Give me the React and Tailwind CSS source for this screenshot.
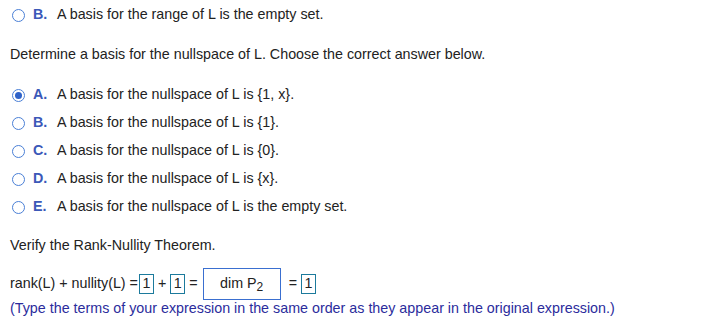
import React from 'react';

function Radio({ checked }) {
    return (
        <span className="relative inline-flex w-[13px] h-[13px] rounded-full border border-[#4a7fd6] bg-white items-center justify-center shrink-0">
            {checked && <span className="w-[7px] h-[7px] rounded-full bg-[#2f62c8]" />}
        </span>
    );
}

function Option({ letter, text, checked }) {
    return (
        <div className="flex items-center h-[28px]">
            <div className="w-[33px] flex justify-start pl-[12px]">
                <Radio checked={checked} />
            </div>
            <span className="w-[24px] font-bold text-[#3b58b8]">{letter}.</span>
            <span>{text}</span>
        </div>
    );
}

function Box({ children }) {
    return (
        <span className="inline-flex items-center justify-center w-[15px] h-[20px] border border-[#1c7a9c] mx-[4px]">{children}</span>
    );
}

export default function App() {
    return (
        <div className="w-[705px] h-[335px] bg-white text-[14.3px] text-[#222]" style={{ fontFamily: '"Liberation Sans", Arial, sans-serif' }}>
            <div className="pt-[1px]">
                <Option letter="B" text="A basis for the range of L is the empty set." />
            </div>
            <div className="pl-[10px] mt-[12px] h-[28px] flex items-center">
                Determine a basis for the nullspace of L. Choose the correct answer below.
            </div>
            <div className="mt-[12px]">
                <Option letter="A" text="A basis for the nullspace of L is {1, x}." checked />
                <Option letter="B" text="A basis for the nullspace of L is {1}." />
                <Option letter="C" text="A basis for the nullspace of L is {0}." />
                <Option letter="D" text="A basis for the nullspace of L is {x}." />
                <Option letter="E" text="A basis for the nullspace of L is the empty set." />
            </div>
            <div className="pl-[10px] mt-[11px] h-[28px] flex items-center">Verify the Rank-Nullity Theorem.</div>
            <div className="pl-[10px] mt-[8px] flex items-center h-[32px]">
                <span className="mr-[-3px]">rank(L) + nullity(L) =</span>
                <Box>1</Box>
                <span>+</span>
                <Box>1</Box>
                <span>=</span>
                <span className="inline-flex items-center justify-center w-[78px] h-[32px] border border-[#3a6fd0] ml-[5px] mr-[8px]">
                    <span>dim P<sub className="text-[12px] relative top-[3px] align-baseline">2</sub></span>
                </span>
                <span>=</span>
                <Box>1</Box>
            </div>
            <div className="pl-[10px] -mt-[2px] text-[#2b2c9c]">
                (Type the terms of your expression in the same order as they appear in the original expression.)
            </div>
        </div>
    );
}
